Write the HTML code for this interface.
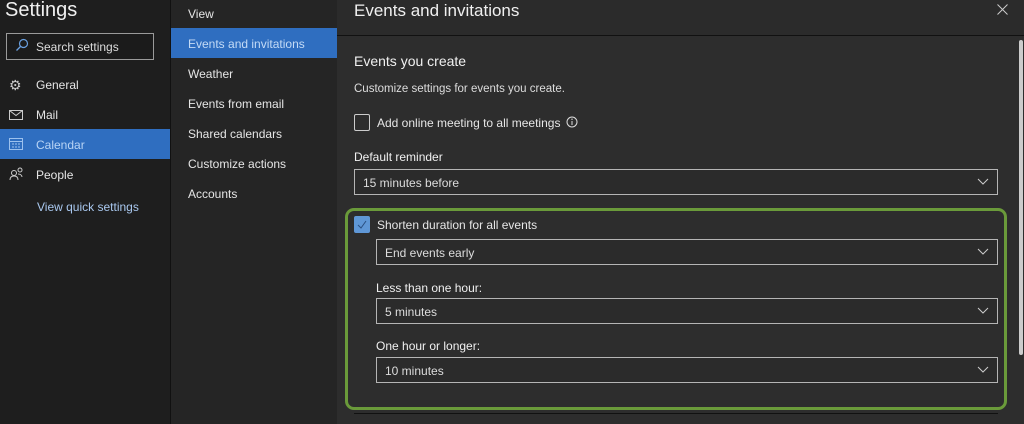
<!DOCTYPE html>
<html><head><style>
*{box-sizing:border-box;margin:0;padding:0}
body{width:1024px;height:424px;overflow:hidden;background:#1f1f1f;font-family:"Liberation Sans",sans-serif;color:#e6e6e6;position:relative;font-size:12px}
.a{position:absolute;white-space:nowrap}
.sel{position:absolute;border:1px solid #b5b5b5;background:#2b2b2b;height:26px;padding:6px 0 0 8px;font-size:12px;color:#ddd}
.sel svg{position:absolute;right:8px;top:8px}
</style></head><body>
<div class="a" style="left:0;top:0;width:170px;height:424px;background:#1e1e1e"></div>
<div class="a" style="left:5px;top:-1px;font-size:20px;color:#f0f0f0">Settings</div>
<div class="a" style="left:6px;top:33px;width:148px;height:27px;border:1px solid #9a9a9a;background:#1b1b1b"></div>
<svg class="a" style="left:15px;top:38px" width="14" height="14"><circle cx="8.5" cy="5.5" r="4" fill="none" stroke="#6aa0e0" stroke-width="1.2"/><line x1="5.5" y1="8.5" x2="1.5" y2="12.5" stroke="#6aa0e0" stroke-width="1.3"/></svg>
<div class="a" style="left:36px;top:40px;color:#ddd">Search settings</div>
<div class="a" style="left:9px;top:77px;font-size:14px;color:#ccc">⚙</div>
<div class="a" style="left:36px;top:78px">General</div>
<svg class="a" style="left:9px;top:110px" width="15" height="10"><rect x="0.5" y="0.5" width="13" height="9" fill="none" stroke="#ccc"/><path d="M0.5 0.5L7 5.5L13.5 0.5" fill="none" stroke="#ccc"/></svg>
<div class="a" style="left:36px;top:108px">Mail</div>
<div class="a" style="left:0;top:129px;width:170px;height:30px;background:#2f6ec0"></div>
<svg class="a" style="left:9px;top:137px" width="15" height="14"><rect x="0.5" y="1.5" width="13" height="11" fill="none" stroke="#9cc1ee"/><line x1="0.5" y1="4.5" x2="13.5" y2="4.5" stroke="#9cc1ee"/><path d="M3 7h2M6 7h2M9 7h2M3 10h2M6 10h2M9 10h2" stroke="#9cc1ee"/></svg>
<div class="a" style="left:36px;top:138px;color:#b8d4f5">Calendar</div>
<svg class="a" style="left:9px;top:167px" width="15" height="14"><circle cx="5" cy="6" r="2.5" fill="none" stroke="#ccc"/><circle cx="11" cy="3" r="2" fill="none" stroke="#ccc"/><path d="M1 13c0-3 2-4 4-4s4 1 4 4M9 7c2 0 4 1 4 3" fill="none" stroke="#ccc"/></svg>
<div class="a" style="left:36px;top:168px">People</div>
<div class="a" style="left:37px;top:200px;color:#a9c8ef">View quick settings</div>
<div class="a" style="left:170px;top:0;width:1px;height:424px;background:#111"></div>
<div class="a" style="left:171px;top:0;width:166px;height:424px;background:#252525"></div>
<div class="a" style="left:171px;top:28px;width:166px;height:30px;background:#2f6ec0"></div>
<div class="a" style="left:188px;top:7px">View</div>
<div class="a" style="left:188px;top:37px;color:#c4dbf6">Events and invitations</div>
<div class="a" style="left:188px;top:67px">Weather</div>
<div class="a" style="left:188px;top:97px">Events from email</div>
<div class="a" style="left:188px;top:127px">Shared calendars</div>
<div class="a" style="left:188px;top:157px">Customize actions</div>
<div class="a" style="left:188px;top:187px">Accounts</div>
<div class="a" style="left:337px;top:0;width:687px;height:35px;background:#2b2b2b"></div>
<div class="a" style="left:337px;top:35px;width:687px;height:1px;background:#111"></div>
<div class="a" style="left:337px;top:36px;width:687px;height:388px;background:#2d2d2d"></div>
<div class="a" style="left:1019px;top:40px;width:4px;height:315px;background:#ccc;border-radius:2px"></div>
<div class="a" style="left:354px;top:1px;font-size:17px;color:#f0f0f0">Events and invitations</div>
<svg class="a" style="left:997px;top:4px" width="11" height="11"><path d="M0.5 0.5L10.5 10.5M10.5 0.5L0.5 10.5" stroke="#ccc"/></svg>
<div class="a" style="left:354px;top:53px;font-size:14px;color:#f0f0f0">Events you create</div>
<div class="a" style="left:354px;top:83px;font-size:11.5px;color:#ddd">Customize settings for events you create.</div>
<div class="a" style="left:354px;top:114px;width:16px;height:17px;border:1px solid #ccc;border-radius:2px"></div>
<div class="a" style="left:377px;top:116px;font-size:12px">Add online meeting to all meetings</div>
<svg class="a" style="left:566px;top:116px" width="12" height="12"><circle cx="6" cy="6" r="5" fill="none" stroke="#ddd"/><line x1="6" y1="5" x2="6" y2="9" stroke="#ddd"/><circle cx="6" cy="3.2" r="0.7" fill="#ddd"/></svg>
<div class="a" style="left:354px;top:150px;font-size:12px;color:#f0f0f0">Default reminder</div>
<div class="sel" style="left:354px;top:169px;width:644px">15 minutes before<svg width="12" height="8"><path d="M1 1L6 6L11 1" fill="none" stroke="#ccc"/></svg></div>
<div class="a" style="left:345px;top:208px;width:662px;height:202px;border:3px solid #6a9a3a;border-radius:9px"></div>
<div class="a" style="left:354px;top:216px;width:16px;height:17px;background:#5f97d6;border-radius:2px"></div>
<svg class="a" style="left:357px;top:220px" width="10" height="9"><path d="M1 5L4 8L9 1" fill="none" stroke="#2a4f80" stroke-width="1"/></svg>
<div class="a" style="left:377px;top:218px">Shorten duration for all events</div>
<div class="sel" style="left:376px;top:239px;width:622px">End events early<svg width="12" height="8"><path d="M1 1L6 6L11 1" fill="none" stroke="#ccc"/></svg></div>
<div class="a" style="left:376px;top:281px;color:#f0f0f0">Less than one hour:</div>
<div class="sel" style="left:376px;top:298px;width:622px">5 minutes<svg width="12" height="8"><path d="M1 1L6 6L11 1" fill="none" stroke="#ccc"/></svg></div>
<div class="a" style="left:376px;top:339px;color:#f0f0f0">One hour or longer:</div>
<div class="sel" style="left:376px;top:357px;width:622px">10 minutes<svg width="12" height="8"><path d="M1 1L6 6L11 1" fill="none" stroke="#ccc"/></svg></div>
<div class="a" style="left:354px;top:413px;width:644px;height:1px;background:#111"></div>
</body></html>
